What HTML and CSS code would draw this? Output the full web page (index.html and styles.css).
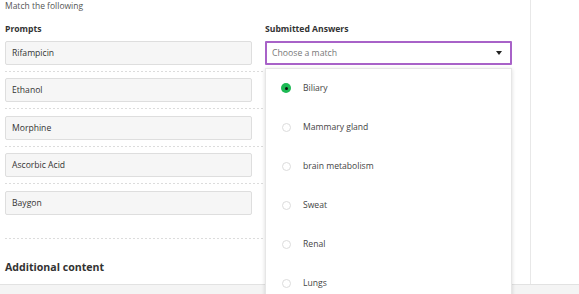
FILE: index.html
```html
<!DOCTYPE html>
<html>
<head>
<meta charset="utf-8">
<link rel="stylesheet" href="styles.css">
</head>
<body>
<div class="page">
  <div class="main">
    <div class="intro">Match the following</div>
    <div class="question">
      <div class="cols-head">
        <div class="col-title">Prompts</div>
        <div class="col-title">Submitted Answers</div>
      </div>
      <div class="row">
        <div class="prompt">Rifampicin</div>
        <div class="select-wrap">
          <div class="select open">
            <span class="placeholder">Choose a match</span>
            <span class="caret"></span>
          </div>
          <ul class="menu">
            <li class="opt"><span class="radio checked"></span>Biliary</li>
            <li class="opt"><span class="radio"></span>Mammary gland</li>
            <li class="opt"><span class="radio"></span>brain metabolism</li>
            <li class="opt"><span class="radio"></span>Sweat</li>
            <li class="opt"><span class="radio"></span>Renal</li>
            <li class="opt"><span class="radio"></span>Lungs</li>
          </ul>
        </div>
      </div>
      <div class="row">
        <div class="prompt">Ethanol</div>
        <div class="select covered"></div>
      </div>
      <div class="row">
        <div class="prompt">Morphine</div>
        <div class="select covered"></div>
      </div>
      <div class="row">
        <div class="prompt">Ascorbic Acid</div>
        <div class="select covered"></div>
      </div>
      <div class="row last">
        <div class="prompt">Baygon</div>
        <div class="select covered"></div>
      </div>
    </div>
    <h2 class="additional">Additional content</h2>
  </div>
  <div class="aside"></div>
</div>
<div class="footer"></div>
</body>
</html>
```

FILE: styles.css
```css
html, body {
  margin: 0;
  padding: 0;
  background: #fff;
  font-family: "Open Sans", "Liberation Sans", sans-serif;
  color: #333;
  overflow: hidden;
}

.page {
  display: flex;
  height: 284px;
}

.main {
  width: 531px;
  border-right: 1px solid #e8e8e8;
  padding-left: 5px;
  box-sizing: border-box;
}

.aside {
  flex: 1;
}

.intro {
  font-size: 8.5px;
  line-height: 12px;
  color: #555;
  margin-top: -0.5px;
}

.question {
  width: 507px;
}

.cols-head {
  display: grid;
  grid-template-columns: 247px 247px;
  column-gap: 13px;
  margin-top: 10px;
  height: 19px;
}

.col-title {
  font-size: 8.6px;
  font-weight: 700;
  line-height: 14px;
  color: #333;
}

.row {
  display: grid;
  grid-template-columns: 247px 247px;
  column-gap: 13px;
  margin-bottom: 6.5px;
  background-image: linear-gradient(to right, #dcdcdc 50%, transparent 50%);
  background-size: 4px 1px;
  background-repeat: repeat-x;
  background-position: left bottom;
  padding-bottom: 7px;
  height: 24px;
}

.row.last {
  padding-bottom: 24px;
}

.prompt {
  box-sizing: border-box;
  height: 24px;
  background: #f6f6f6;
  border: 1px solid #dedede;
  border-radius: 2px;
  font-size: 8.6px;
  line-height: 22px;
  padding-left: 6px;
  color: #333;
}

.select-wrap {
  position: relative;
}

.select {
  box-sizing: border-box;
  height: 24px;
  border: 1px solid #cfcfcf;
  border-radius: 1px;
  background: #fff;
  display: flex;
  align-items: center;
  justify-content: space-between;
  padding: 0 8px 0 6px;
  font-size: 8.7px;
}

.select.covered {
  visibility: hidden;
}

.select.open {
  border: 2px solid #a862c8;
  padding-left: 5px;
}

.placeholder {
  color: #777;
}

.caret {
  width: 0;
  height: 0;
  border-left: 3.5px solid transparent;
  border-right: 3.5px solid transparent;
  border-top: 4.5px solid #222;
}

.menu {
  position: absolute;
  left: 0;
  top: 27px;
  width: 247px;
  margin: 0;
  padding: 0;
  list-style: none;
  background: #fff;
  border: 1px solid #e6e6e6;
  box-sizing: border-box;
  box-shadow: 0 1px 4px rgba(0, 0, 0, 0.15);
  z-index: 5;
}

.opt {
  height: 39px;
  display: flex;
  align-items: center;
  font-size: 8.6px;
  color: #444;
  padding-left: 15.5px;
}

.radio {
  width: 9px;
  height: 9px;
  border-radius: 50%;
  border: 1px solid #dcdcdc;
  box-sizing: border-box;
  margin-right: 12.5px;
  position: relative;
  flex: none;
}

.radio.checked {
  width: 10px;
  height: 10px;
  border: none;
  background: #1db954;
  margin-left: -0.5px;
  margin-right: 12px;
}

.radio.checked::after {
  content: "";
  position: absolute;
  left: 3.5px;
  top: 3.5px;
  width: 3px;
  height: 3px;
  border-radius: 50%;
  background: #111;
}

.additional {
  margin: 20px 0 0;
  font-size: 10.6px;
  font-weight: 700;
  line-height: 16px;
  color: #333;
}

.footer {
  height: 10px;
  background: #f4f4f4;
  border-top: 1px solid #e2e2e2;
}
```
